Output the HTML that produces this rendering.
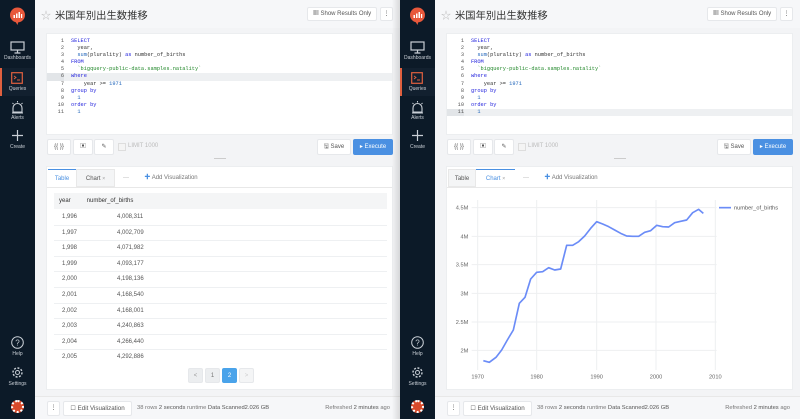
<!DOCTYPE html>
<html><head><meta charset="utf-8"><style>
*{margin:0;padding:0;box-sizing:border-box}
body{width:800px;height:419px;overflow:hidden;background:#0c1a28;font-family:"Liberation Sans","Noto Sans CJK JP",sans-serif;position:relative}
.p{position:absolute;top:0;width:400px;height:419px;background:#f3f4f6;overflow:hidden}
.sb{position:absolute;left:0;top:0;width:35px;height:419px;background:#0c1a28;color:#c9cfd6;font-size:5px;text-align:center}
.sb .it{position:absolute;left:0;width:35px}
.sb .act{position:absolute;left:0;top:68px;width:35px;height:28px;background:#12202f;border-left:2px solid #e0603f}
.abs{position:absolute}
.hdr{position:absolute;left:35px;top:0;width:365px;height:28px;background:#f6f7f9}
.btn{position:absolute;background:#fff;border:1px solid #e6e8eb;border-radius:2px;font-size:6px;color:#555;text-align:center}
.ed{position:absolute;left:46px;top:33px;width:347px;height:102px;background:#fff;border:1px solid #eceef0}
.code{position:absolute;left:0;top:4px;font-family:"Liberation Mono",monospace;font-size:5.3px;line-height:7.1px;width:345px}
.code div{height:7.1px;white-space:pre;color:#333}
.code .n{display:inline-block;width:17px;text-align:right;color:#555;margin-right:7px}
.k{color:#2222dd}.s{color:#22882a}.f{color:#2266bb}
.card{position:absolute;left:46px;top:166px;width:347px;height:224px;background:#fff;border:1px solid #eceef0}
.tab{position:absolute;top:2px;height:18px;font-size:6px;line-height:18px;text-align:center}
.row{position:absolute;left:7px;width:333px;height:15.6px;border-bottom:1px solid #eef0f2;font-size:6px;color:#555;line-height:15px}
.ft{position:absolute;left:35px;top:396px;width:365px;height:23px;background:#f6f7f9;border-top:1px solid #e8e8e8;font-size:5.8px;color:#777}
.title{position:absolute;left:20px;top:7px;font-size:10.3px;color:#333}
</style></head><body>

<div class="p" style="left:0">
 <div class="sb">
  <svg class="abs" style="left:9px;top:7px" width="17" height="19" viewBox="0 0 17 19"><circle cx="8.5" cy="8" r="7.5" fill="#e8583b"/><path d="M6 14l2.5 4 1-4z" fill="#e8583b"/><rect x="4.5" y="8" width="1.5" height="3" fill="#fff"/><rect x="7" y="6.5" width="1.5" height="4.5" fill="#fff"/><rect x="9.5" y="5" width="1.5" height="6" fill="#fff"/><rect x="12" y="7" width="1.2" height="4" fill="#fff"/></svg>
  <div class="act"></div>
  <svg class="abs" style="left:10px;top:41px" width="15" height="13" viewBox="0 0 15 13"><rect x="1" y="1" width="13" height="8" fill="none" stroke="#c9cfd6" stroke-width="1.2"/><path d="M7.5 9v3M4.5 12h6" stroke="#c9cfd6" stroke-width="1.2"/></svg>
  <div class="it" style="top:55px">Dashboards</div>
  <svg class="abs" style="left:11px;top:72px" width="12" height="12" viewBox="0 0 12 12"><rect x="0.7" y="0.7" width="10.6" height="10.6" fill="none" stroke="#e0603f" stroke-width="1.2"/><path d="M3 4l2 1.5-2 1.5M6 8h3" stroke="#e0603f" stroke-width="0.9" fill="none"/></svg>
  <div class="it" style="top:86px">Queries</div>
  <svg class="abs" style="left:11px;top:101px" width="13" height="13" viewBox="0 0 13 13"><path d="M2 11V7a4.5 4.5 0 019 0v4z" fill="none" stroke="#c9cfd6" stroke-width="1.1"/><path d="M1 12h11M6.5 0v1.5M1.5 2l1 1M11.5 2l-1 1" stroke="#c9cfd6" stroke-width="1"/></svg>
  <div class="it" style="top:115px">Alerts</div>
  <svg class="abs" style="left:12px;top:130px" width="11" height="11" viewBox="0 0 11 11"><path d="M5.5 0v11M0 5.5h11" stroke="#c9cfd6" stroke-width="1.2"/></svg>
  <div class="it" style="top:144px">Create</div>
  <svg class="abs" style="left:11px;top:336px" width="13" height="13" viewBox="0 0 13 13"><circle cx="6.5" cy="6.5" r="5.8" fill="none" stroke="#c9cfd6" stroke-width="1"/><text x="6.5" y="9.3" font-size="8" text-anchor="middle" fill="#c9cfd6" font-family="Liberation Sans">?</text></svg>
  <div class="it" style="top:351px">Help</div>
  <svg class="abs" style="left:11px;top:366px" width="13" height="13" viewBox="0 0 13 13"><circle cx="6.5" cy="6.5" r="4.5" fill="none" stroke="#c9cfd6" stroke-width="1.4" stroke-dasharray="2 1.5"/><circle cx="6.5" cy="6.5" r="2" fill="none" stroke="#c9cfd6" stroke-width="1"/></svg>
  <div class="it" style="top:381px">Settings</div>
  <div class="abs" style="left:11px;top:400px;width:13px;height:13px;border-radius:50%;background:#d84a2a;border:2px dotted #fff"></div>
 </div>
 <div class="hdr">
  <div class="abs" style="left:6px;top:7px;font-size:10px;color:#bbb">☆</div>
  <div class="title">米国年別出生数推移</div>
  <div class="btn" style="left:272px;top:7px;width:70px;height:14px;line-height:12px">▦ Show Results Only</div>
  <div class="btn" style="left:345px;top:7px;width:13px;height:14px;line-height:12px">⋮</div>
 </div>
 <div class="ed"><div class="code">
  <div><span class="n">1</span><span class="k">SELECT</span></div>
  <div><span class="n">2</span>  year,</div>
  <div><span class="n">3</span>  <span class="f">sum</span>(plurality) <span class="k">as</span> number_of_births</div>
  <div><span class="n">4</span><span class="k">FROM</span></div>
  <div><span class="n">5</span>  <span class="s">`bigquery-public-data.samples.natality`</span></div>
  <div style="background:#eef0f2"><span class="n" style="background:#e2e5e8">6</span><span class="k">where</span></div>
  <div><span class="n">7</span>    year &gt;= <span class="f">1971</span></div>
  <div><span class="n">8</span><span class="k">group by</span></div>
  <div><span class="n">9</span>  <span class="f">1</span></div>
  <div><span class="n">10</span><span class="k">order by</span></div>
  <div><span class="n">11</span>  <span class="f">1</span></div>
 </div></div>
 <div class="btn" style="left:47px;top:139px;width:24px;height:16px;line-height:14px">{{ }}</div>
 <div class="btn" style="left:73px;top:139px;width:20px;height:16px;line-height:14px">▣</div>
 <div class="btn" style="left:94px;top:139px;width:20px;height:16px;line-height:14px">✎</div>
 <div class="abs" style="left:118px;top:143px;width:8px;height:8px;border:1px solid #ddd;background:#f4f4f4"></div>
 <div class="abs" style="left:128px;top:143px;font-size:6px;color:#bbb">LIMIT 1000</div>
 <div class="btn" style="left:317px;top:139px;width:34px;height:16px;line-height:14px">🖫 Save</div>
 <div class="btn" style="left:353px;top:139px;width:40px;height:16px;line-height:14px;background:#4a90e2;border-color:#4a90e2;color:#fff">▸ Execute</div>
 <div class="abs" style="left:214px;top:158px;width:12px;height:1px;background:#ccc"></div>
 <div class="card">
  <div class="tab" style="left:1px;width:28px;color:#4a90e2;border-top:1px solid #4a90e2">Table</div>
  <div class="tab" style="left:29px;width:39px;color:#555;background:#f4f5f6;border:1px solid #e8e8e8">Chart <span style="font-size:5px;color:#999">×</span></div>
  <div class="tab" style="left:72px;width:14px;color:#bbb">—</div>
  <div class="tab" style="left:94px;width:60px;color:#777"><span style="color:#4a90e2">✚</span> Add Visualization</div>
  <div class="abs" style="left:0;top:20px;width:345px;height:1px;background:#e8e8e8"></div>
  <div class="abs" style="left:7px;top:26px;width:333px;height:16px;background:#f4f5f6;font-size:6px;color:#333;line-height:16px"><span style="margin-left:5px">year</span><span style="margin-left:16px">number_of_births</span></div>
  <div class="row" style="top:43px"><span class="abs" style="left:8px">1,996</span><span class="abs" style="left:63px">4,008,311</span></div>
  <div class="row" style="top:58.6px"><span class="abs" style="left:8px">1,997</span><span class="abs" style="left:63px">4,002,709</span></div>
  <div class="row" style="top:74.2px"><span class="abs" style="left:8px">1,998</span><span class="abs" style="left:63px">4,071,982</span></div>
  <div class="row" style="top:89.8px"><span class="abs" style="left:8px">1,999</span><span class="abs" style="left:63px">4,093,177</span></div>
  <div class="row" style="top:105.4px"><span class="abs" style="left:8px">2,000</span><span class="abs" style="left:63px">4,198,136</span></div>
  <div class="row" style="top:121px"><span class="abs" style="left:8px">2,001</span><span class="abs" style="left:63px">4,168,540</span></div>
  <div class="row" style="top:136.6px"><span class="abs" style="left:8px">2,002</span><span class="abs" style="left:63px">4,168,001</span></div>
  <div class="row" style="top:152.2px"><span class="abs" style="left:8px">2,003</span><span class="abs" style="left:63px">4,240,863</span></div>
  <div class="row" style="top:167.8px"><span class="abs" style="left:8px">2,004</span><span class="abs" style="left:63px">4,266,440</span></div>
  <div class="row" style="top:183.4px;border:0"><span class="abs" style="left:8px">2,005</span><span class="abs" style="left:63px">4,292,886</span></div>
  <div class="btn" style="left:141px;top:201px;width:15px;height:15px;line-height:14px;background:#eceef0;color:#999">&lt;</div>
  <div class="btn" style="left:158px;top:201px;width:15px;height:15px;line-height:14px;background:#eceef0;color:#777">1</div>
  <div class="btn" style="left:175px;top:201px;width:15px;height:15px;line-height:14px;background:#4aa3ea;border-color:#4aa3ea;color:#fff">2</div>
  <div class="btn" style="left:192px;top:201px;width:15px;height:15px;line-height:14px;background:#f4f5f6;color:#ccc">&gt;</div>
 </div>
 <div class="ft">
  <div class="btn" style="left:12px;top:4px;width:13px;height:15px;line-height:13px">⋮</div>
  <div class="btn" style="left:28px;top:4px;width:69px;height:15px;line-height:13px;font-size:6.2px">☐ Edit Visualization</div>
  <div class="abs" style="left:102px;top:8px;color:#777">38 rows <span style="color:#555">2 seconds</span> runtime <span style="color:#555">Data Scanned2.026 GB</span></div>
  <div class="abs" style="right:10px;top:8px">Refreshed <span style="color:#555">2 minutes</span> ago</div>
 </div>
 <div class="abs" style="left:392px;top:0;width:8px;height:419px;background:linear-gradient(to right,rgba(0,0,0,0),rgba(0,0,0,0.12))"></div>
</div>

<div class="p" style="left:400px">
 <div class="sb">
  <svg class="abs" style="left:9px;top:7px" width="17" height="19" viewBox="0 0 17 19"><circle cx="8.5" cy="8" r="7.5" fill="#e8583b"/><path d="M6 14l2.5 4 1-4z" fill="#e8583b"/><rect x="4.5" y="8" width="1.5" height="3" fill="#fff"/><rect x="7" y="6.5" width="1.5" height="4.5" fill="#fff"/><rect x="9.5" y="5" width="1.5" height="6" fill="#fff"/><rect x="12" y="7" width="1.2" height="4" fill="#fff"/></svg>
  <div class="act"></div>
  <svg class="abs" style="left:10px;top:41px" width="15" height="13" viewBox="0 0 15 13"><rect x="1" y="1" width="13" height="8" fill="none" stroke="#c9cfd6" stroke-width="1.2"/><path d="M7.5 9v3M4.5 12h6" stroke="#c9cfd6" stroke-width="1.2"/></svg>
  <div class="it" style="top:55px">Dashboards</div>
  <svg class="abs" style="left:11px;top:72px" width="12" height="12" viewBox="0 0 12 12"><rect x="0.7" y="0.7" width="10.6" height="10.6" fill="none" stroke="#e0603f" stroke-width="1.2"/><path d="M3 4l2 1.5-2 1.5M6 8h3" stroke="#e0603f" stroke-width="0.9" fill="none"/></svg>
  <div class="it" style="top:86px">Queries</div>
  <svg class="abs" style="left:11px;top:101px" width="13" height="13" viewBox="0 0 13 13"><path d="M2 11V7a4.5 4.5 0 019 0v4z" fill="none" stroke="#c9cfd6" stroke-width="1.1"/><path d="M1 12h11M6.5 0v1.5M1.5 2l1 1M11.5 2l-1 1" stroke="#c9cfd6" stroke-width="1"/></svg>
  <div class="it" style="top:115px">Alerts</div>
  <svg class="abs" style="left:12px;top:130px" width="11" height="11" viewBox="0 0 11 11"><path d="M5.5 0v11M0 5.5h11" stroke="#c9cfd6" stroke-width="1.2"/></svg>
  <div class="it" style="top:144px">Create</div>
  <svg class="abs" style="left:11px;top:336px" width="13" height="13" viewBox="0 0 13 13"><circle cx="6.5" cy="6.5" r="5.8" fill="none" stroke="#c9cfd6" stroke-width="1"/><text x="6.5" y="9.3" font-size="8" text-anchor="middle" fill="#c9cfd6" font-family="Liberation Sans">?</text></svg>
  <div class="it" style="top:351px">Help</div>
  <svg class="abs" style="left:11px;top:366px" width="13" height="13" viewBox="0 0 13 13"><circle cx="6.5" cy="6.5" r="4.5" fill="none" stroke="#c9cfd6" stroke-width="1.4" stroke-dasharray="2 1.5"/><circle cx="6.5" cy="6.5" r="2" fill="none" stroke="#c9cfd6" stroke-width="1"/></svg>
  <div class="it" style="top:381px">Settings</div>
  <div class="abs" style="left:11px;top:400px;width:13px;height:13px;border-radius:50%;background:#d84a2a;border:2px dotted #fff"></div>
 </div>
 <div class="hdr">
  <div class="abs" style="left:6px;top:7px;font-size:10px;color:#bbb">☆</div>
  <div class="title">米国年別出生数推移</div>
  <div class="btn" style="left:272px;top:7px;width:70px;height:14px;line-height:12px">▦ Show Results Only</div>
  <div class="btn" style="left:345px;top:7px;width:13px;height:14px;line-height:12px">⋮</div>
 </div>
 <div class="ed"><div class="code">
  <div><span class="n">1</span><span class="k">SELECT</span></div>
  <div><span class="n">2</span>  year,</div>
  <div><span class="n">3</span>  <span class="f">sum</span>(plurality) <span class="k">as</span> number_of_births</div>
  <div><span class="n">4</span><span class="k">FROM</span></div>
  <div><span class="n">5</span>  <span class="s">`bigquery-public-data.samples.natality`</span></div>
  <div><span class="n">6</span><span class="k">where</span></div>
  <div><span class="n">7</span>    year &gt;= <span class="f">1971</span></div>
  <div><span class="n">8</span><span class="k">group by</span></div>
  <div><span class="n">9</span>  <span class="f">1</span></div>
  <div><span class="n">10</span><span class="k">order by</span></div>
  <div style="background:#eef0f2"><span class="n" style="background:#e2e5e8">11</span>  <span class="f">1</span></div>
 </div></div>
 <div class="btn" style="left:47px;top:139px;width:24px;height:16px;line-height:14px">{{ }}</div>
 <div class="btn" style="left:73px;top:139px;width:20px;height:16px;line-height:14px">▣</div>
 <div class="btn" style="left:94px;top:139px;width:20px;height:16px;line-height:14px">✎</div>
 <div class="abs" style="left:118px;top:143px;width:8px;height:8px;border:1px solid #ddd;background:#f4f4f4"></div>
 <div class="abs" style="left:128px;top:143px;font-size:6px;color:#bbb">LIMIT 1000</div>
 <div class="btn" style="left:317px;top:139px;width:34px;height:16px;line-height:14px">🖫 Save</div>
 <div class="btn" style="left:353px;top:139px;width:40px;height:16px;line-height:14px;background:#4a90e2;border-color:#4a90e2;color:#fff">▸ Execute</div>
 <div class="abs" style="left:214px;top:158px;width:12px;height:1px;background:#ccc"></div>
 <div class="card">
  <div class="tab" style="left:1px;width:28px;color:#555;background:#f4f5f6;border:1px solid #e8e8e8">Table</div>
  <div class="tab" style="left:29px;width:39px;color:#4a90e2;border-top:1px solid #4a90e2">Chart <span style="font-size:5px;color:#999">×</span></div>
  <div class="tab" style="left:72px;width:14px;color:#bbb">—</div>
  <div class="tab" style="left:94px;width:60px;color:#777"><span style="color:#4a90e2">✚</span> Add Visualization</div>
  <div class="abs" style="left:0;top:20px;width:345px;height:1px;background:#e8e8e8"></div>
 </div>
 <svg class="abs" style="left:0;top:160px" width="400" height="259" viewBox="0 0 1200 777">
  <g stroke="#eeeff1" stroke-width="3">
   <path d="M233 120V630M410 120V630M590 120V630M768 120V630M946 120V630"/>
   <path d="M215 143H950M215 229H950M215 314H950M215 400H950M215 486H950M215 571H950"/>
  </g>
  <g font-family="Liberation Sans" font-size="17" fill="#666" text-anchor="end">
   <text x="205" y="149">4.5M</text><text x="205" y="235">4M</text><text x="205" y="320">3.5M</text><text x="205" y="406">3M</text><text x="205" y="492">2.5M</text><text x="205" y="577">2M</text>
  </g>
  <g font-family="Liberation Sans" font-size="17" fill="#666" text-anchor="middle">
   <text x="233" y="656">1970</text><text x="410" y="656">1980</text><text x="590" y="656">1990</text><text x="768" y="656">2000</text><text x="946" y="656">2010</text>
  </g>
  <polyline fill="none" stroke="#6b8cf7" stroke-width="5" stroke-linejoin="round" points="250,602 268,607 288,592 305,570 322,540 340,510 358,430 375,412 392,357 410,337 428,335 446,323 464,330 482,327 500,256 518,256 536,245 554,228 572,205 590,185 608,192 626,200 644,210 662,220 680,228 698,229 716,229 734,217 752,212 770,196 788,200 806,201 824,188 842,184 860,180 878,158 896,148 910,160"/>
  <path d="M957 143H993" stroke="#6b8cf7" stroke-width="5"/>
  <text x="1002" y="149" font-family="Liberation Sans" font-size="17" fill="#555">number_of_births</text>
 </svg>
 <div class="ft">
  <div class="btn" style="left:12px;top:4px;width:13px;height:15px;line-height:13px">⋮</div>
  <div class="btn" style="left:28px;top:4px;width:69px;height:15px;line-height:13px;font-size:6.2px">☐ Edit Visualization</div>
  <div class="abs" style="left:102px;top:8px;color:#777">38 rows <span style="color:#555">2 seconds</span> runtime <span style="color:#555">Data Scanned2.026 GB</span></div>
  <div class="abs" style="right:10px;top:8px">Refreshed <span style="color:#555">2 minutes</span> ago</div>
 </div>
</div>
</body></html>
